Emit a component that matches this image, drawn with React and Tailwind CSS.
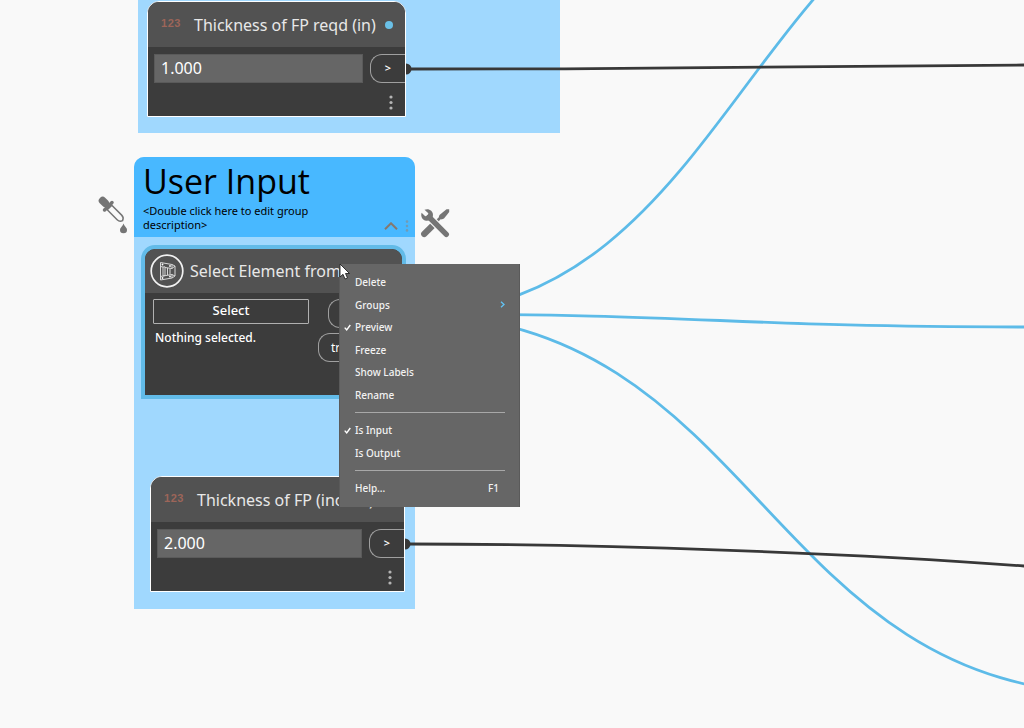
import React from "react";

const wires = [
  { d: "M405 315 C745 315 745 -141 1085 -141", color: "#5dbbe8" },
  { d: "M405 314 C720 314 720 327 1035 327", color: "#5dbbe8" },
  { d: "M405 314 C762 314 762 694 1119 694", color: "#5dbbe8" },
  { d: "M408 69 C620 69 850 68 1024 65 L1600 58", color: "#383838" },
  { d: "M408 544 C600 544 850 553 1024 566 L1600 612", color: "#383838" },
];

function Wires() {
  return (
    <svg
      className="pointer-events-none absolute left-0 top-0 h-[728px] w-[1024px] overflow-visible"
      viewBox="0 0 1024 728"
      fill="none"
      aria-hidden="true"
    >
      {wires.map((w) => (
        <path key={w.d} d={w.d} stroke={w.color} strokeWidth="2.800" />
      ))}
      <circle cx="406" cy="69" r="5.500" fill="#383838" />
      <circle cx="405" cy="544" r="5.500" fill="#383838" />
    </svg>
  );
}

function Dots({ className }) {
  return (
    <svg className={className} viewBox="0 0 4 15" fill="currentColor" aria-hidden="true">
      <circle cx="2" cy="2" r="1.6" />
      <circle cx="2" cy="7.5" r="1.6" />
      <circle cx="2" cy="13" r="1.6" />
    </svg>
  );
}

function NumberNode({ className, title, value, modified }) {
  return (
    <section
      className={`absolute overflow-hidden rounded-t-xl border border-white bg-[#3c3c3c] ${className}`}
    >
      <header className="flex h-[45px] items-center bg-[#525252] pl-[13px]">
        <span className="w-[33px] pb-1 font-[Liberation_Sans] text-[11px] font-bold leading-4 tracking-wider text-[#9d6559]">
          123
        </span>
        <h3 className="whitespace-nowrap text-base text-[#e8e8e8]">{title}</h3>
        {modified && <span className="ml-[9px] size-2 shrink-0 rounded-full bg-[#6ac0e7]" />}
      </header>
      <div className="flex gap-[7px] pl-[6px] pt-[7px]">
        <input
          aria-label={title}
          defaultValue={value}
          className="h-[29px] min-w-0 flex-1 border border-[#5a5a5a] bg-[#666] px-[6px] pb-[2px] text-base text-white outline-none"
        />
        <button
          type="button"
          aria-label="Output port"
          className="h-[29px] w-[35px] rounded-l-xl border border-r-0 border-[#a0a0a0] text-[11px] font-semibold text-white"
        >
          &gt;
        </button>
      </div>
      <button
        type="button"
        aria-label="Node options"
        className="ml-auto mr-3 mt-3 flex text-[#b5b5b5]"
      >
        <Dots className="h-[15px] w-1" />
      </button>
    </section>
  );
}

function ElementIcon() {
  return (
    <svg className="size-[34px] shrink-0" viewBox="0 0 34 34" fill="none" aria-hidden="true">
      <circle cx="17" cy="17" r="15.800" stroke="#f2f2f2" strokeWidth="1.700" />
      <g stroke="#d8d8d8" strokeWidth="1" strokeLinejoin="round">
        <path d="M10.500 8.500 L22 10.500 L25 12 V22 L22 24 L10.500 26 Z" />
        <path d="M10.500 12.500 L13 13 V22 L10.500 22.500 M13 13 L15 12.800 V21.500 L13 22" />
        <path d="M15 13.500 L22 14.500 L25 12 M22 10.500 V14.500 M13 22 L22 20.500 L25 22 M22 20.500 V24" />
        <path d="M17.500 14 V21 M20 14.500 V20.500" />
      </g>
      <g fill="#fff">
        <circle cx="12.500" cy="10.500" r="0.900" />
        <circle cx="20" cy="12" r="0.900" />
        <circle cx="12.500" cy="24" r="0.900" />
        <circle cx="20" cy="22.500" r="0.900" />
      </g>
    </svg>
  );
}

function SelectNode() {
  return (
    <section className="absolute left-[141px] top-[245px] h-[154px] w-[265px] overflow-hidden rounded-t-[14px] border-4 border-[#62bbe8] bg-[#3c3c3c]">
      <header className="flex h-11 items-center gap-[6px] overflow-hidden rounded-t-[10px] bg-[#525252] pl-[5px]">
        <ElementIcon />
        <h3 className="whitespace-nowrap text-base text-[#e8e8e8]">Select Element from</h3>
      </header>
      <div className="flex justify-between pl-2 pt-[6px]">
        <div className="w-[156px]">
          <button
            type="button"
            className="flex h-[25px] w-full items-start justify-center rounded-[1px] border border-[#b0b0b0] text-[13px] font-medium leading-5 text-white"
          >
            Select
          </button>
          <p className="mt-1 pl-[2px] text-[12px] font-medium leading-5 text-white">
            Nothing selected.
          </p>
        </div>
        <div className="flex flex-col items-end gap-[5px]">
          <button
            type="button"
            aria-label="Element port"
            className="h-[29px] w-[74px] rounded-l-xl border border-r-0 border-[#a0a0a0]"
          />
          <button
            type="button"
            aria-label="Transform port"
            className="h-[29px] w-[84px] rounded-l-xl border border-r-0 border-[#a0a0a0] pl-3 text-left text-[12px] text-white"
          >
            tr
          </button>
        </div>
      </div>
    </section>
  );
}

function Check() {
  return (
    <svg className="size-[7px]" viewBox="0 0 7 7" fill="none" aria-hidden="true">
      <path d="M0.700 3.600 L2.700 5.800 L6.300 1" stroke="#fff" strokeWidth="1.400" />
    </svg>
  );
}

function MenuItem({ label, checked, hint, submenu }) {
  return (
    <button
      type="button"
      role={checked ? "menuitemcheckbox" : "menuitem"}
      aria-checked={checked}
      className="flex w-full items-center pr-[14px] text-left text-[10px] font-medium leading-4 text-[#f2f2f2]"
    >
      <span className="flex w-[15px] justify-center">{checked && <Check />}</span>
      <span className="flex-1">{label}</span>
      {hint && <span className="pr-[6px]">{hint}</span>}
      {submenu && (
        <svg className="h-[7px] w-[5px]" viewBox="0 0 5 7" fill="none" aria-hidden="true">
          <path d="M1 0.800 L4 3.500 L1 6.200" stroke="#62c4f5" strokeWidth="1.300" />
        </svg>
      )}
    </button>
  );
}

function ContextMenu() {
  return (
    <div
      role="menu"
      className="absolute left-[339px] top-[264px] w-[181px] border-x border-[#5a5a5a] bg-[#666] pb-2 pt-[7px]"
    >
      <div className="grid h-[135px] grid-rows-6">
        <MenuItem label="Delete" />
        <MenuItem label="Groups" submenu />
        <MenuItem label="Preview" checked />
        <MenuItem label="Freeze" />
        <MenuItem label="Show Labels" />
        <MenuItem label="Rename" />
      </div>
      <hr className="my-[6px] ml-[15px] mr-[14px] border-[#a8a8a8]" />
      <div className="grid h-[45px] grid-rows-2">
        <MenuItem label="Is Input" checked />
        <MenuItem label="Is Output" />
      </div>
      <hr className="my-[6px] ml-[15px] mr-[14px] border-[#a8a8a8]" />
      <div className="grid h-[22px]">
        <MenuItem label="Help..." hint="F1" />
      </div>
    </div>
  );
}

function Eyedropper() {
  return (
    <svg className="absolute left-[97px] top-[195px] h-10 w-8" viewBox="0 0 32 40" aria-hidden="true">
      <g transform="translate(6.500 6.500) rotate(-45)" fill="#757575">
        <rect x="-3.800" y="-5" width="7.600" height="11" rx="3.500" />
        <rect x="-7" y="5" width="14" height="3.500" rx="1.700" />
        <path
          d="M-3.200 8.500 H3.200 V22.500 C3.200 24.500 1.500 26.500 0 27 C-1.500 26.500 -3.200 24.500 -3.200 22.500 Z"
          fill="#f9f9f9"
          stroke="#757575"
          strokeWidth="1.500"
          strokeLinejoin="round"
        />
      </g>
      <path d="M26.500 28.500 C27.500 31.500 30 32.500 30 35 A3.400 3.200 0 0 1 23 35 C23 32.500 25.500 31.500 26.500 28.500 Z" fill="#757575" />
    </svg>
  );
}

function Tools() {
  return (
    <svg className="absolute left-[420px] top-[208px] size-[30px]" viewBox="0 0 30 30" aria-hidden="true">
      <path d="M4.200 26 L13 17.200" stroke="#757575" strokeWidth="6.200" strokeLinecap="round" />
      <path d="M14 16 L22 8" stroke="#757575" strokeWidth="2.600" />
      <path d="M19.500 7 L26.500 1.200 L29.200 1.200 L29.200 4 L24 10.500 L21.500 11.500 L18.800 9 Z" fill="#757575" />
      <path d="M10 10 L26 26" stroke="#f9f9f9" strokeWidth="7.800" />
      <path d="M9 9 L26.300 26.300" stroke="#757575" strokeWidth="5.400" strokeLinecap="round" />
      <path
        d="M4.500 1.800 L8.300 5.200 L7.800 7.800 L5.200 8.300 L1.600 4.800 C0.500 8 2 11.500 5 12.500 C7 13.200 8.500 12.800 10 12 L12.500 9.500 C13.500 7 13 4.500 11.200 2.800 C9.500 1.200 7 0.800 4.500 1.800 Z"
        fill="#757575"
      />
    </svg>
  );
}

function Cursor() {
  return (
    <svg className="pointer-events-none absolute left-[339px] top-[263px] h-[18px] w-3" viewBox="0 0 12 18" aria-hidden="true">
      <path
        d="M1 1 V14 L4 11.300 L6 16 L8.500 15 L6.500 10.500 H10.500 Z"
        fill="#fff"
        stroke="#222"
        strokeWidth="0.900"
      />
    </svg>
  );
}

export default function App() {
  return (
    <main className="relative min-h-screen w-full overflow-hidden bg-[#f9f9f9] font-['Noto_Sans',sans-serif]">
      <section className="absolute left-[138px] top-0 h-[133px] w-[422px] bg-[#a0d8fe]" />
      <section className="absolute left-[134px] top-[157px] h-[452px] w-[281px] rounded-t-[10px] bg-[#a0d8fe]">
        <header className="flex h-20 items-end justify-between rounded-t-[10px] bg-[#48b8ff] pb-[5px] pl-[9px] pr-[6px] text-black">
          <div>
            <h2 className="font-['Open_Sans',sans-serif] text-[34px] leading-[46px]">User Input</h2>
            <p className="w-[200px] text-[11px] leading-[14px]">
              &lt;Double click here to edit group description&gt;
            </p>
          </div>
          <div className="flex items-center gap-[7px] text-[#85786f]">
            <button type="button" aria-label="Collapse group">
              <svg className="h-2 w-[14px]" viewBox="0 0 14 8" fill="none" aria-hidden="true">
                <path d="M1 7.300 L7 1.300 L13 7.300" stroke="currentColor" strokeWidth="2" />
              </svg>
            </button>
            <button type="button" aria-label="Group options" className="text-[#729bb5]">
              <Dots className="h-3 w-1" />
            </button>
          </div>
        </header>
      </section>

      <Wires />

      <NumberNode
        className="left-[147px] top-px h-[116px] w-[259px]"
        title="Thickness of FP reqd (in)"
        value="1.000"
        modified
      />
      <SelectNode />
      <NumberNode
        className="left-[150px] top-[476px] h-[116px] w-[255px]"
        title="Thickness of FP (inches)"
        value="2.000"
      />
      <Eyedropper />
      <Tools />
      <ContextMenu />
      <Cursor />
    </main>
  );
}
